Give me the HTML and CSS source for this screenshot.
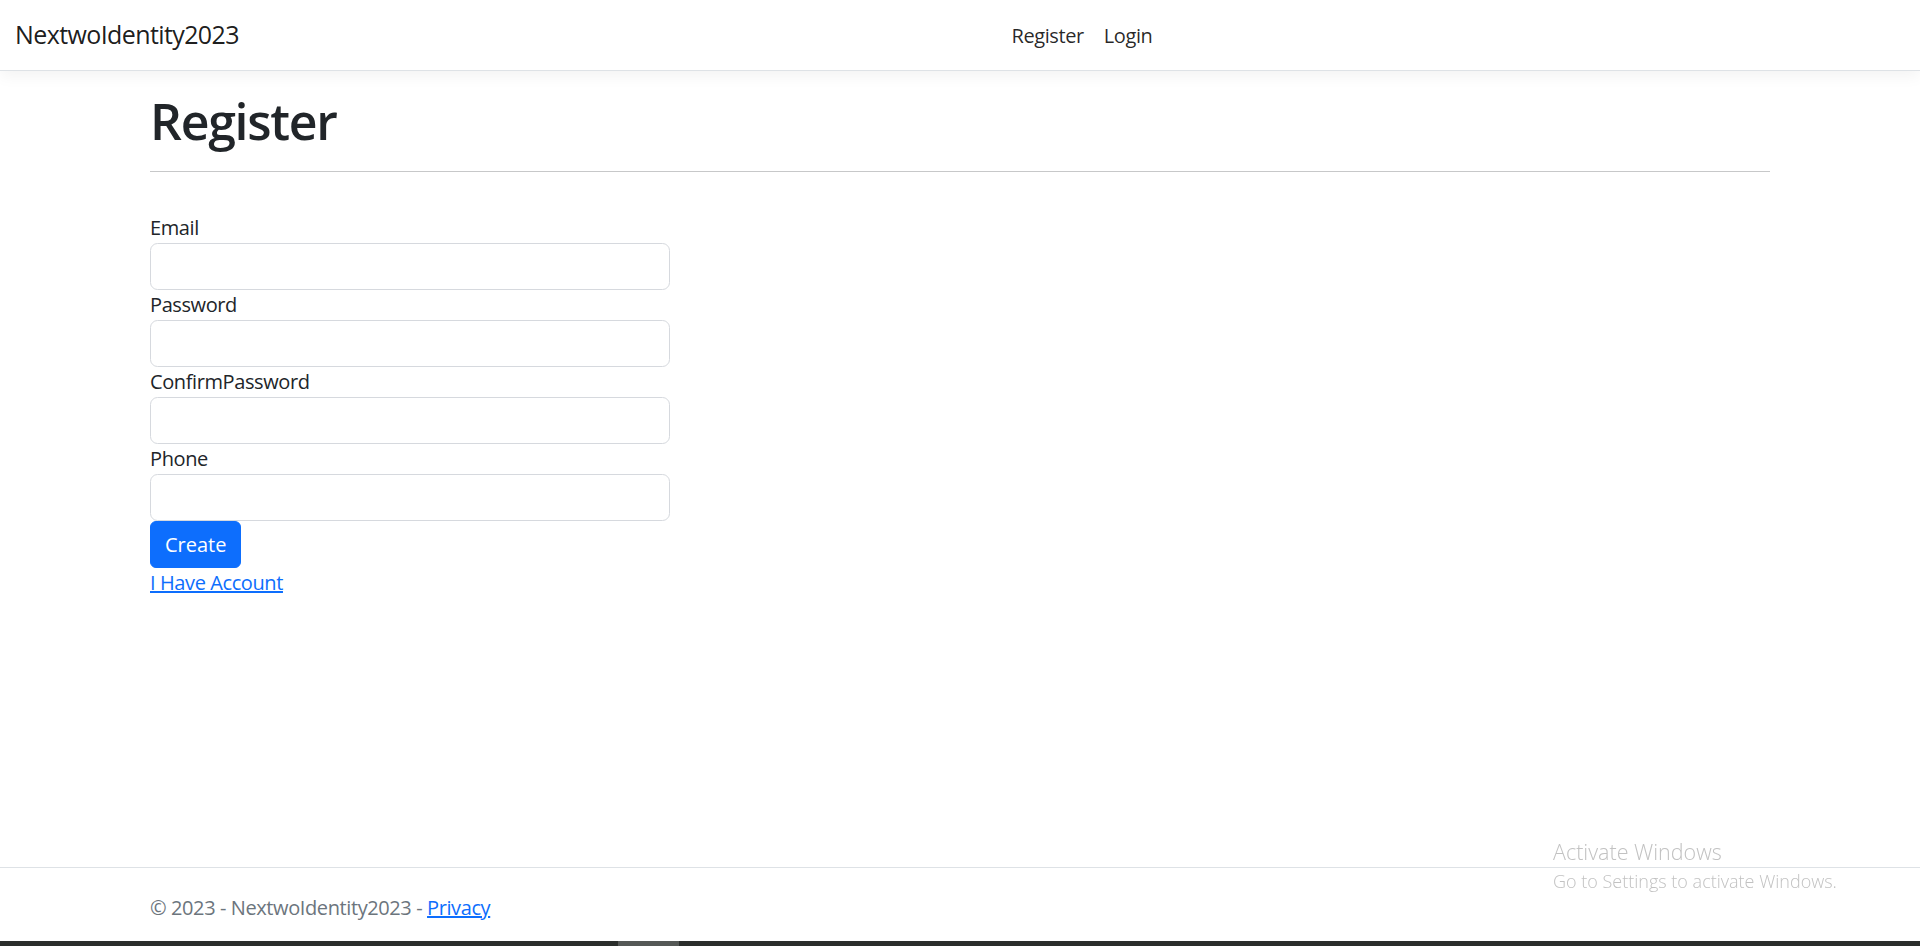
FILE: index.html
```html
<!DOCTYPE html>
<html lang="en">
<head>
    <meta charset="utf-8" />
    <title>Register - NextwoIdentity2023</title>
    <link rel="stylesheet" href="styles.css">
</head>
<body>
<div class="page">
    <header class="navbar">
        <a class="navbar-brand" href="#">NextwoIdentity2023</a>
        <ul class="navbar-nav">
            <li><a class="nav-link" href="#">Register</a></li>
            <li><a class="nav-link" href="#">Login</a></li>
        </ul>
    </header>

    <div class="container">
        <main role="main">
            <h1>Register</h1>
            <hr />
            <form class="register-form">
                <label for="Email">Email</label>
                <input id="Email" class="form-control" type="email" />
                <label for="Password">Password</label>
                <input id="Password" class="form-control" type="password" />
                <label for="ConfirmPassword">ConfirmPassword</label>
                <input id="ConfirmPassword" class="form-control" type="password" />
                <label for="Phone">Phone</label>
                <input id="Phone" class="form-control" type="text" />
                <button type="submit" class="btn btn-primary">Create</button>
                <a class="account-link" href="#">I Have Account</a>
            </form>
        </main>
    </div>

    <footer class="footer">
        <div class="container">
            &copy; 2023 - NextwoIdentity2023 - <a href="#">Privacy</a>
        </div>
    </footer>
</div>
<div class="taskbar"><span class="taskbar-item"></span></div>

<div class="activate">
    <div class="activate-title">Activate Windows</div>
    <div class="activate-text">Go to Settings to activate Windows.</div>
</div>
</body>
</html>
```

FILE: styles.css
```css
html, body {
    margin: 0;
    padding: 0;
}
body {
    font-family: "Open Sans", "Noto Sans", sans-serif;
    font-size: 20px;
    line-height: 1.5;
    letter-spacing: -0.4px;
    color: #212529;
    background: #fff;
    overflow: hidden;
}
a {
    color: #0d6efd;
}
.page {
    height: 941px;
    display: flex;
    flex-direction: column;
}
.navbar {
    display: flex;
    align-items: center;
    height: 70px;
    padding: 0 15px;
    background: #fff;
    border-bottom: 1px solid #dee2e6;
    box-shadow: 0 5px 15px rgba(0, 0, 0, .05);
    margin-bottom: 20px;
    box-sizing: content-box;
}
.navbar-brand {
    font-size: 25px;
    line-height: 37.5px;
    color: rgba(0, 0, 0, .9);
    text-decoration: none;
    margin-right: 20px;
    letter-spacing: -0.6px;
}
.navbar-nav {
    flex: 1;
    display: flex;
    justify-content: center;
    list-style: none;
    margin: 2px 0 0;
    padding: 0;
}
.nav-link {
    display: block;
    padding: 10px;
    color: rgba(0, 0, 0, .85);
    text-decoration: none;
}
.container {
    width: 100%;
    max-width: 1650px;
    box-sizing: border-box;
    margin: 0 auto;
    padding: 0 15px;
}
h1 {
    font-size: 50px;
    font-weight: 600;
    line-height: 1.2;
    margin: 0 0 10px;
    letter-spacing: -1.3px;
}
hr {
    margin: 20px 0;
    border: 0;
    border-top: 1px solid #212529;
    opacity: .25;
}
.register-form {
    width: 520px;
    padding-top: 21px;
}
.register-form label {
    display: block;
}
.form-control {
    display: block;
    width: 100%;
    box-sizing: border-box;
    height: 47px;
    margin: 0;
    padding: 7.5px 15px;
    font: inherit;
    border: 1px solid #d6d9de;
    border-radius: 7.5px;
    background: #fff;
}
.btn {
    display: inline-block;
    font: inherit;
    padding: 7.5px 14px;
    border: 1px solid transparent;
    border-radius: 6px;
    cursor: pointer;
}
.btn-primary {
    color: #fff;
    background: #0d6efd;
    border-color: #0d6efd;
}
.account-link {
    display: block;
    width: max-content;
}
.footer {
    margin-top: auto;
    height: 74px;
    padding-top: 6px;
    box-sizing: border-box;
    border-top: 1px solid #dee2e6;
    color: #6c757d;
    white-space: nowrap;
}
.footer .container {
    line-height: 68px;
}
.taskbar {
    height: 5px;
    background: #2b2e2c;
    position: relative;
}
.taskbar-item {
    position: absolute;
    left: 618px;
    top: 0;
    width: 61px;
    height: 5px;
    background: #555856;
}
.activate {
    position: fixed;
    left: 1553px;
    top: 837px;
    color: #c2c2c2;
    pointer-events: none;
    letter-spacing: 0;
}
.activate-title {
    font-size: 21.5px;
    line-height: 30px;
    font-weight: 300;
}
.activate-text {
    font-size: 18px;
    line-height: 28px;
    font-weight: 300;
}
```
